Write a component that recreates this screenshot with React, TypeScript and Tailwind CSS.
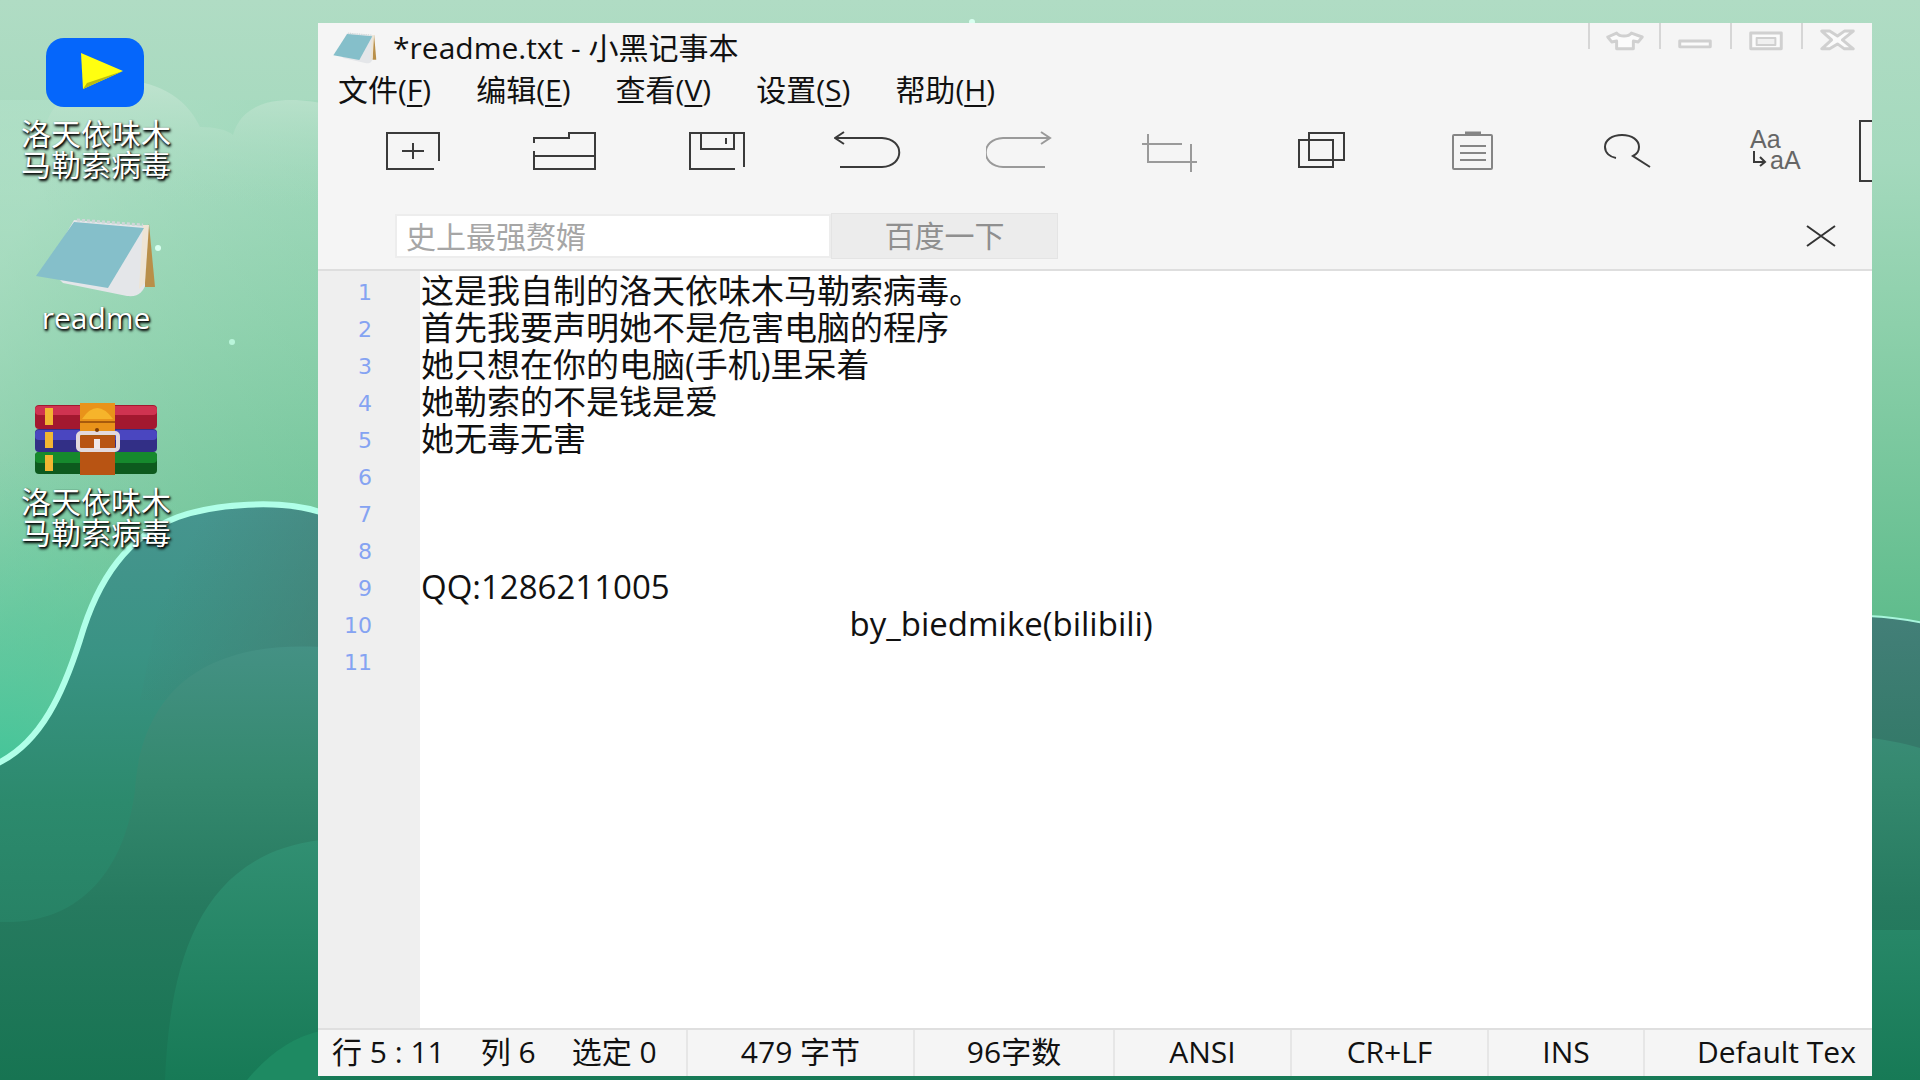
import React from "react";

interface DesktopIconInterface {
    lines: string[];
    children?: any;
}

interface ToolButtonInterface {
    label: string;
    disabled?: boolean;
    children?: any;
}

const documentText = [
    "这是我自制的洛天依味木马勒索病毒。",
    "首先我要声明她不是危害电脑的程序",
    "她只想在你的电脑(手机)里呆着",
    "她勒索的不是钱是爱",
    "她无毒无害",
    "",
    "",
    "",
    "QQ:1286211005",
    " ".repeat(50) + "by_biedmike(bilibili)",
    "",
];

const menus = [
    { name: "文件", hotkey: "F" },
    { name: "编辑", hotkey: "E" },
    { name: "查看", hotkey: "V" },
    { name: "设置", hotkey: "S" },
    { name: "帮助", hotkey: "H" },
];

const Wallpaper = () => {
    return (
        <svg className="absolute inset-0 w-full h-full" viewBox="0 0 1920 1080" preserveAspectRatio="none" aria-hidden="true">
            <defs>
                <linearGradient id="sky" x1="0" y1="0" x2="0" y2="1">
                    <stop offset="0" stopColor="#b0dcc4" />
                    <stop offset="0.15" stopColor="#a4d9bd" />
                    <stop offset="0.3" stopColor="#8dd0ab" />
                    <stop offset="0.58" stopColor="#5fbc8c" />
                    <stop offset="1" stopColor="#4fb485" />
                </linearGradient>
                <linearGradient id="glow" gradientUnits="userSpaceOnUse" x1="0" y1="260" x2="330" y2="440">
                    <stop offset="0" stopColor="#b4e2ca" stopOpacity="0.9" />
                    <stop offset="1" stopColor="#84cfaa" stopOpacity="0.4" />
                </linearGradient>
                <radialGradient id="mint" gradientUnits="userSpaceOnUse" cx="0" cy="780" r="330">
                    <stop offset="0" stopColor="#41c498" />
                    <stop offset="1" stopColor="#6fd0a8" stopOpacity="0" />
                </radialGradient>
                <linearGradient id="cloud" x1="0" y1="0" x2="0" y2="1">
                    <stop offset="0" stopColor="#bfe3cf" />
                    <stop offset="0.6" stopColor="#a4dabd" stopOpacity="0" />
                </linearGradient>
                <linearGradient id="hillA" gradientUnits="userSpaceOnUse" x1="0" y1="505" x2="0" y2="1000">
                    <stop offset="0" stopColor="#47958f" />
                    <stop offset="0.3" stopColor="#3a9384" />
                    <stop offset="0.6" stopColor="#2c8a6d" />
                    <stop offset="1" stopColor="#247d60" />
                </linearGradient>
                <linearGradient id="hillShade" gradientUnits="userSpaceOnUse" x1="180" y1="560" x2="340" y2="640">
                    <stop offset="0" stopColor="#457a70" stopOpacity="0" />
                    <stop offset="1" stopColor="#457a70" stopOpacity="0.6" />
                </linearGradient>
                <linearGradient id="hillB" gradientUnits="userSpaceOnUse" x1="0" y1="646" x2="0" y2="1080">
                    <stop offset="0" stopColor="#449184" />
                    <stop offset="0.3" stopColor="#35896f" />
                    <stop offset="0.6" stopColor="#267a5f" />
                    <stop offset="1" stopColor="#177452" />
                </linearGradient>
                <linearGradient id="hillC" gradientUnits="userSpaceOnUse" x1="0" y1="840" x2="0" y2="1080">
                    <stop offset="0" stopColor="#318f72" />
                    <stop offset="1" stopColor="#177a56" />
                </linearGradient>
                <linearGradient id="hillRight" gradientUnits="userSpaceOnUse" x1="0" y1="617" x2="0" y2="740">
                    <stop offset="0" stopColor="#437f78" />
                    <stop offset="1" stopColor="#357a6a" />
                </linearGradient>
            </defs>
            <rect width="1920" height="1080" fill="url(#sky)" />
            <path d="M0 100H400V760H0Z" fill="url(#glow)" opacity="0.6" />
            <path d="M46 125C60 70 170 60 200 127C215 127 228 130 233 135C245 92 300 98 330 105V290H46Z" fill="url(#cloud)" />
            <rect width="400" height="1080" fill="url(#mint)" />
            <circle cx="158" cy="248" r="3" fill="#d9fff0" />
            <circle cx="232" cy="342" r="3" fill="#b9f5da" />
            <circle cx="972" cy="22" r="3" fill="#d9fff0" />
            <path
                d="M-4 764C42 743 64 690 80 640C98 578 128 536 178 517C215 504 280 499 320 512C700 640 1500 610 1872 617C1890 618 1910 620 1924 624V1084H-4Z"
                fill="url(#hillA)"
            />
            <path d="M1872 617C1890 618 1910 620 1924 624V800H1872Z" fill="url(#hillRight)" />
            <path d="M178 517C215 504 280 499 320 512V700H140Z" fill="url(#hillShade)" />
            <path d="M-4 764C42 743 64 690 80 640C98 578 128 536 178 517C215 504 280 499 320 512" fill="none" stroke="#b0ffe8" strokeWidth="6" />
            <path d="M1868 616C1890 617 1910 620 1924 623" fill="none" stroke="#a8f5dc" strokeWidth="2" />
            <path d="M0 922C80 925 125 870 135 790C140 710 185 640 320 647C900 700 1500 720 1872 738Q1900 742 1920 748V1080H0Z" fill="url(#hillB)" />
            <path d="M165 1080C170 960 200 855 320 840L1872 930H1920V1080Z" fill="url(#hillC)" />
            <path d="M247 1080Q280 1040 320 1031V1080Z" fill="#1e8a62" />
        </svg>
    );
};

const NotepadArt = () => {
    return (
        <>
            <path d="M39 3L110 9L113 62C108 76 104 80 92 79L28 66L12 50Z" fill="#e4e6e9" />
            <path d="M114 7L120 70H110V20Z" fill="#b98f49" />
            <path d="M108 8L114 8L110 66L104 72Z" fill="#eee4d4" />
            <path d="M39 5L109 11L73 71L1 59Z" fill="#85bfca" />
            <path d="M42 3L108 8" stroke="#cfd6d8" strokeWidth="3" strokeDasharray="3 2" />
        </>
    );
};

const DesktopIcon = ({ lines, children }: DesktopIconInterface) => {
    return (
        <button type="button" className="flex flex-col items-center w-full h-[184px]">
            <svg className="w-[122px] h-[85px] shrink-0" viewBox="0 0 122 85" aria-hidden="true">
                {children}
            </svg>
            <span className="text-[30px] leading-[31px] text-white [text-shadow:1px_2px_3px_#000,1px_1px_2px_#000]">
                {lines.map((line, index) => (
                    <span key={index} className="block whitespace-nowrap">{line}</span>
                ))}
            </span>
        </button>
    );
};

const ToolButton = ({ label, disabled, children }: ToolButtonInterface) => {
    return (
        <button type="button" aria-label={label} disabled={disabled} className="w-[152px] h-[66px] shrink-0 flex items-center justify-center">
            <svg className="w-[70px] h-[44px]" viewBox="0 0 70 44" fill="none" stroke={disabled ? "#9a9a9a" : "#3a3a3a"} strokeWidth="2" aria-hidden="true">
                {children}
            </svg>
        </button>
    );
};

const CaptionButton = ({ label, children }: ToolButtonInterface) => {
    return (
        <button type="button" aria-label={label} className="w-[71px] h-[26px] border-l-2 border-[#d6d6d6]">
            <svg className="w-full h-[30px]" viewBox="0 0 70 30" fill="#fbfbfb" stroke="#d0d0d0" strokeWidth="3" strokeLinejoin="round" aria-hidden="true">
                {children}
            </svg>
        </button>
    );
};

const App = () => {
    return (
        <div className="relative h-screen overflow-hidden font-['Open_Sans','Noto_Sans_CJK_SC',sans-serif] text-[#111]">
            <Wallpaper />
            <div className="relative flex h-full">
                <nav className="w-[318px] shrink-0 pt-[33px]" aria-label="桌面">
                    <div className="w-[192px]">
                        <DesktopIcon lines={["洛天依味木", "马勒索病毒"]}>
                            <rect x="11" y="5" width="98" height="69" rx="18" fill="#0566fb" />
                            <path d="M46 20L88 38L48 56Z" fill="#ffff10" />
                            <path d="M52 50L88 38L48 56Z" fill="#b9bb10" />
                        </DesktopIcon>
                        <DesktopIcon lines={["readme"]}>
                            <NotepadArt />
                        </DesktopIcon>
                        <DesktopIcon lines={["洛天依味木", "马勒索病毒"]}>
                            <rect y="4" width="122" height="24" rx="4" fill="#a3182f" />
                            <rect y="5" width="122" height="9" rx="4" fill="#cf3350" />
                            <rect y="28" width="122" height="23" rx="4" fill="#322f86" />
                            <rect y="29" width="122" height="10" rx="4" fill="#4a46c0" />
                            <rect y="51" width="122" height="22" rx="4" fill="#0d5a1e" />
                            <rect y="51" width="122" height="11" rx="4" fill="#16892d" />
                            <path d="M10 7H18V24H10ZM10 31H18V47H10ZM10 54H18V70H10Z" fill="#f2b632" />
                            <rect x="45" y="2" width="35" height="72" fill="#b85413" />
                            <path d="M45 2H80V34H45Z" fill="#e9931a" />
                            <path d="M47 18Q62 -4 78 18Z" fill="#f6b42b" />
                            <path d="M45 21H80M45 34H80" stroke="#a85b0c" strokeWidth="2" />
                            <rect x="43" y="32" width="40" height="17" rx="3" fill="none" stroke="#e3d9dc" strokeWidth="4" />
                            <path d="M62 38V48" stroke="#efe8ea" strokeWidth="6" />
                            <circle cx="62" cy="29" r="2" fill="#7c3c06" />
                        </DesktopIcon>
                    </div>
                </nav>

                <main className="flex flex-col flex-1 min-w-0 mt-[23px] mr-12 mb-1 bg-[#f5f5f5] overflow-hidden">
                    <header className="h-[248px] shrink-0 border-b-2 border-[#dedede]">
                        <div className="flex h-[46px]">
                            <div className="flex items-center flex-1 gap-4 pl-[15px] pt-1">
                                <svg className="w-11 h-8" viewBox="0 0 122 81" preserveAspectRatio="none" aria-hidden="true">
                                    <NotepadArt />
                                </svg>
                                <h1 className="text-[30px] leading-[42px] whitespace-nowrap">*readme.txt - 小黑记事本</h1>
                            </div>
                            <CaptionButton label="皮肤">
                                <path d="M27 10C30 14 39 14 42 10L53 14L49 19L44 18V26H27V18L22 19L18 14Z" />
                            </CaptionButton>
                            <CaptionButton label="最小化">
                                <rect x="19" y="18" width="31" height="6" />
                            </CaptionButton>
                            <CaptionButton label="最大化">
                                <rect x="19" y="10" width="31" height="16" />
                                <rect x="25" y="15" width="19" height="7" fill="#f0f0f0" strokeWidth="2" />
                            </CaptionButton>
                            <CaptionButton label="关闭">
                                <path d="M19 8H27L35 13L42 8H51L40 17L51 26H42L35 21L27 26H19L29 17Z" />
                            </CaptionButton>
                        </div>

                        <div className="flex h-[42px] gap-[45px] pl-5 text-[30px] leading-[40px]">
                            {menus.map((menu) => (
                                <button type="button" key={menu.hotkey} className="whitespace-nowrap">
                                    {menu.name}(<u className="underline-offset-4 decoration-2">{menu.hotkey}</u>)
                                </button>
                            ))}
                        </div>

                        <div className="flex pt-[7px] pl-[19px] overflow-hidden">
                            <ToolButton label="新建">
                                <path d="M61 32V4H9V40H56M35 14V30M24 22H46" />
                            </ToolButton>
                            <ToolButton label="打开">
                                <path d="M4 14V9H39V4H65V40H4V22M4 27H65" />
                            </ToolButton>
                            <ToolButton label="保存">
                                <path d="M62 38V4H8V40H53M19 4V20H52V4M44 9V15" />
                            </ToolButton>
                            <ToolButton label="撤销">
                                <path d="M10 3L1 9L10 15M1 9H48C71 10 71 37 48 38H6" />
                            </ToolButton>
                            <ToolButton label="重做" disabled>
                                <path d="M55 3L64 9L55 15M64 9H17C-6 10 -6 37 17 38H59" />
                            </ToolButton>
                            <ToolButton label="剪切" disabled>
                                <path d="M10 5V33H59M4 15H44M53 15V43" />
                            </ToolButton>
                            <ToolButton label="复制">
                                <path d="M19 4H54V31H19ZM9 11H43V38H9Z" />
                            </ToolButton>
                            <ToolButton label="粘贴">
                                <g stroke="#858585">
                                    <rect x="11" y="6" width="39" height="34" rx="1" />
                                    <path d="M23 4H39" strokeWidth="3" />
                                    <path d="M18 17H44M18 24H44M18 31H44" />
                                </g>
                            </ToolButton>
                            <ToolButton label="查找">
                                <path d="M22 29C16 28 11 24 11 18C11 11 18 6 28 6C38 6 45 11 45 18C45 22 43 25 39 27L56 38" />
                            </ToolButton>
                            <ToolButton label="大小写转换">
                                <g fill="#666" stroke="none" fontFamily="Liberation Sans, sans-serif" fontSize="25">
                                    <text x="4" y="19">Aa</text>
                                    <text x="24" y="40">aA</text>
                                </g>
                                <path d="M8 22V33H18M14 28L19 33L14 37" />
                            </ToolButton>
                            <button type="button" aria-label="自动换行" className="w-[66px] h-[62px] ml-[2px] mt-[2px] shrink-0 border-2 border-[#3a3a3a]" />
                        </div>

                        <div className="flex items-center h-[46px] mt-[29px] pl-[77px] pr-[36px]">
                            <input
                                type="text"
                                aria-label="搜索"
                                placeholder="史上最强赘婿"
                                className="w-[436px] h-[44px] px-[9px] text-[30px] leading-[42px] bg-white border-2 border-[#ededed] placeholder:text-[#a6a6a6] outline-none"
                            />
                            <button type="button" className="w-[227px] h-[46px] text-[30px] leading-[42px] text-[#8f8f8f] bg-[#ececec] border border-[#e4e4e4]">百度一下</button>
                            <button type="button" aria-label="关闭搜索栏" className="ml-auto">
                                <svg className="w-[30px] h-[22px]" viewBox="0 0 30 22" stroke="#333" strokeWidth="2" aria-hidden="true">
                                    <path d="M1 1L29 21M29 1L1 21" />
                                </svg>
                            </button>
                        </div>
                    </header>

                    <div className="flex flex-1 min-h-0 bg-white">
                        <ol className="w-[102px] shrink-0 pt-[3px] pr-12 bg-[#efefef] text-right font-['DejaVu_Sans',sans-serif] text-[22px] leading-[37px] text-[#85a3f2]">
                            {documentText.map((_, index) => (
                                <li key={index}>{index + 1}</li>
                            ))}
                        </ol>
                        <textarea
                            aria-label="readme.txt"
                            defaultValue={documentText.join("\n")}
                            spellCheck={false}
                            wrap="off"
                            className="flex-1 min-w-0 pt-[1px] pl-[1px] text-[33px] leading-[37px] resize-none outline-none overflow-hidden"
                        />
                    </div>

                    <footer className="flex h-[48px] shrink-0 border-t-2 border-[#dfdfdf] text-[30px] leading-[44px] whitespace-nowrap">
                        <div className="flex w-[368px] shrink-0 gap-[36px] pl-[14px]">
                            <span>行 5 : 11</span>
                            <span>列 6</span>
                            <span>选定 0</span>
                        </div>
                        <div className="w-[227px] shrink-0 border-l-2 border-[#e6e6e6] text-center">479 字节</div>
                        <div className="w-[200px] shrink-0 border-l-2 border-[#e6e6e6] text-center">96字数</div>
                        <div className="w-[177px] shrink-0 border-l-2 border-[#e6e6e6] text-center">ANSI</div>
                        <div className="w-[197px] shrink-0 border-l-2 border-[#e6e6e6] text-center">CR+LF</div>
                        <div className="w-[156px] shrink-0 border-l-2 border-[#e6e6e6] text-center">INS</div>
                        <div className="flex-1 border-l-2 border-[#e6e6e6] pl-[52px]">Default Tex</div>
                    </footer>
                </main>
            </div>
        </div>
    );
};

export default App;
